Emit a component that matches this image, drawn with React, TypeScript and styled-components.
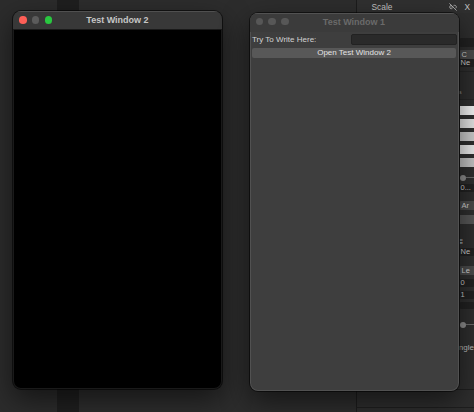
import React from 'react'
import styled, { createGlobalStyle } from 'styled-components'
import { Link2Off } from 'lucide-react'

const GlobalStyle = createGlobalStyle`
  html, body {
    margin: 0;
    padding: 0;
    background: #2a2a2a;
  }
  body {
    font-family: 'Liberation Sans', Arial, sans-serif;
    -webkit-font-smoothing: antialiased;
  }
`

const Desktop = styled.div`
  position: relative;
  width: 474px;
  height: 412px;
  overflow: hidden;
  display: flex;
  flex-direction: row;
  background: #2b2b2b;
`

const Pane = styled.div<{ $w?: number; $bg: string }>`
  flex: ${(p) => (p.$w ? `0 0 ${p.$w}px` : '1')};
  background: ${(p) => p.$bg};
`

const Inspector = styled.div`
  flex: 0 0 114px;
  display: flex;
  flex-direction: column;
  background: #2e2e2e;
  border-left: 1px solid #1c1c1c;
`

const InspectorHeader = styled.div`
  height: 13px;
  display: flex;
  align-items: center;
  padding: 0 4px 0 15px;
  font-size: 8.4px;
  color: #c4c4c4;
  background: #303030;
`

const HeaderLabel = styled.span`
  flex: 1;
`

const HeaderClose = styled.span`
  margin-left: 7px;
`

const InspectorBody = styled.div`
  flex: 1;
  display: flex;
  flex-direction: column;
  padding-left: 103px;
`

const DarkField = styled.div<{ $mt: number; $h?: number }>`
  margin-top: ${(p) => p.$mt}px;
  height: ${(p) => p.$h ?? 8}px;
  background: #212121;
  border-radius: 1px;
  font-size: 7.5px;
  line-height: ${(p) => p.$h ?? 8}px;
  color: #cfcfcf;
  padding-left: 1px;
  white-space: nowrap;
  overflow: hidden;
`

const ButtonField = styled.div<{ $mt: number }>`
  margin-top: ${(p) => p.$mt}px;
  height: 9px;
  background: #4a4a4a;
  border-radius: 1px 0 0 1px;
  font-size: 7.5px;
  line-height: 9px;
  color: #d6d6d6;
  padding-left: 2px;
  white-space: nowrap;
  overflow: hidden;
`

const Swatch = styled.div<{ $mt: number; $c: string }>`
  margin-top: ${(p) => p.$mt}px;
  height: 9px;
  background: ${(p) => p.$c};
`

const SmallLabel = styled.div<{ $mt: number; $shift?: number; $size?: number }>`
  margin-top: ${(p) => p.$mt}px;
  margin-left: ${(p) => p.$shift ?? 0}px;
  font-size: ${(p) => p.$size ?? 6}px;
  color: ${(p) => (p.$size ? '#bdbdbd' : '#8a8a8a')};
  white-space: nowrap;
  height: 7px;
`

const SliderRow = styled.div<{ $mt: number }>`
  margin-top: ${(p) => p.$mt}px;
  display: flex;
  align-items: center;
  height: 7px;
  &::before {
    content: '';
    width: 6px;
    height: 6px;
    border-radius: 50%;
    background: #8e8e8e;
  }
  &::after {
    content: '';
    flex: 1;
    height: 1px;
    background: #6a6a6a;
  }
`

const GripIcon = styled.div<{ $mt: number }>`
  margin-top: ${(p) => p.$mt}px;
  font-size: 8px;
  line-height: 8px;
  color: #cfcfcf;
  letter-spacing: -1px;
`

const Rule = styled.div<{ $mt: number }>`
  margin-top: ${(p) => p.$mt}px;
  margin-left: -103px;
  height: 1px;
  background: #262626;
`

const InspectorFooter = styled.div`
  height: 22px;
  border-top: 1px solid #1f1f1f;
  display: flex;
  flex-direction: column;
  justify-content: flex-end;
  &::after {
    content: '';
    height: 4px;
    border-top: 1px solid #1f1f1f;
  }
`

const Window = styled.div<{ $x: number; $y: number; $body: string }>`
  position: absolute;
  left: ${(p) => p.$x}px;
  top: ${(p) => p.$y}px;
  width: 209px;
  height: 378px;
  border-radius: 8px;
  overflow: hidden;
  display: flex;
  flex-direction: column;
  background: ${(p) => p.$body};
  box-shadow: 0 0 0 1px rgba(0, 0, 0, 0.55), inset 0 0 0 1px rgba(255, 255, 255, 0.1),
    0 10px 28px rgba(0, 0, 0, 0.55);
`

const TitleBar = styled.div<{ $active?: boolean }>`
  flex: 0 0 18px;
  display: grid;
  grid-template-columns: 1fr auto 1fr;
  align-items: center;
  padding: 0 6px;
  background: ${(p) => (p.$active ? '#383838' : '#3b3b3b')};
  border-bottom: 1px solid ${(p) => (p.$active ? '#1a1a1a' : '#3b3b3b')};
  box-shadow: inset 0 1px 0 rgba(255, 255, 255, 0.12);
`

const Lights = styled.div`
  display: flex;
  gap: 5.3px;
`

const Light = styled.span<{ $c: string }>`
  width: 7.6px;
  height: 7.6px;
  border-radius: 50%;
  background: ${(p) => p.$c};
`

const Title = styled.div<{ $active?: boolean }>`
  font-size: 9px;
  font-weight: 700;
  color: ${(p) => (p.$active ? '#c6c6c6' : '#6a6a6a')};
  white-space: nowrap;
`

const Content = styled.div`
  flex: 1;
  display: flex;
  flex-direction: column;
  padding: 2px 2px 0 2.5px;
  gap: 2.5px;
`

const FieldRow = styled.div`
  display: flex;
  align-items: center;
  height: 11.5px;
`

const Label = styled.div`
  flex: 0 0 99px;
  font-size: 8px;
  color: #d2d2d2;
  white-space: nowrap;
`

const TextInput = styled.div`
  flex: 1;
  height: 100%;
  background: #2a2a2a;
  border: 1px solid #222;
  border-radius: 2px;
  box-sizing: border-box;
`

const Button = styled.div`
  height: 10.5px;
  margin-right: 0.5px;
  background: #585858;
  border-radius: 2px;
  font-size: 8px;
  line-height: 10.5px;
  text-align: center;
  color: #e4e4e4;
`

const swatches = ['#f2f2f2', '#e2e2e2', '#c9c9c9', '#e9e9e9', '#c2c2c2']

export default function App() {
  return (
    <>
      <GlobalStyle />
      <Desktop>
        <Pane $w={57} $bg='#2c2c2c' />
        <Pane $w={22} $bg='#1f1f1f' />
        <Pane $bg='#2d2d2d' />
        <Inspector>
          <InspectorHeader>
            <HeaderLabel>Scale</HeaderLabel>
            <Link2Off size={8} color='#bdbdbd' strokeWidth={2.4} />
            <HeaderClose>X</HeaderClose>
          </InspectorHeader>
          <InspectorBody>
            <DarkField $mt={25} $h={9} />
            <ButtonField $mt={3}>C</ButtonField>
            <DarkField $mt={0}>Ne</DarkField>
            <Rule $mt={4} />
            <SmallLabel $mt={17} $shift={-8}>
              Gra
            </SmallLabel>
            <Rule $mt={3} />
            {swatches.map((c, i) => (
              <Swatch key={c + i} $mt={i === 0 ? 6 : 4} $c={c} />
            ))}
            <SliderRow $mt={7} />
            <DarkField $mt={3}>0...</DarkField>
            <ButtonField $mt={9}>Ar</ButtonField>
            <Swatch $mt={5} $c='#565656' />
            <GripIcon $mt={14}>⁞⁞</GripIcon>
            <DarkField $mt={2}>Ne</DarkField>
            <ButtonField $mt={10}>Le</ButtonField>
            <DarkField $mt={4}>0</DarkField>
            <DarkField $mt={4}>1</DarkField>
            <DarkField $mt={3} $h={7} />
            <SliderRow $mt={12} />
            <SmallLabel $mt={15} $shift={-6} $size={8}>
              Angle
            </SmallLabel>
          </InspectorBody>
          <InspectorFooter />
        </Inspector>

        <Window $x={13} $y={11} $body='#000'>
          <TitleBar $active>
            <Lights>
              <Light $c='#fe5f57' />
              <Light $c='#5b5b5b' />
              <Light $c='#29c840' />
            </Lights>
            <Title $active>Test Window 2</Title>
            <span />
          </TitleBar>
        </Window>

        <Window $x={249.5} $y={12.5} $body='#3e3e3e'>
          <TitleBar>
            <Lights>
              <Light $c='#575757' />
              <Light $c='#575757' />
              <Light $c='#575757' />
            </Lights>
            <Title>Test Window 1</Title>
            <span />
          </TitleBar>
          <Content>
            <FieldRow>
              <Label>Try To Write Here:</Label>
              <TextInput />
            </FieldRow>
            <Button>Open Test Window 2</Button>
          </Content>
        </Window>
      </Desktop>
    </>
  )
}
